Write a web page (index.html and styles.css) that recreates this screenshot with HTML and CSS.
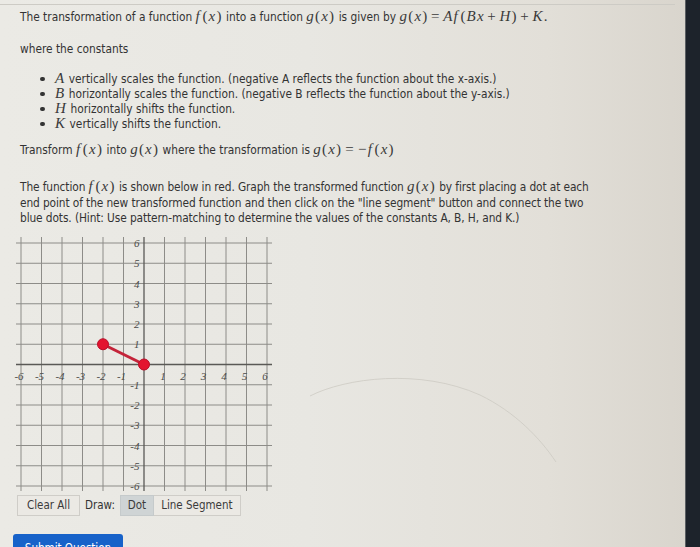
FILE: index.html
```html
<!DOCTYPE html>
<html>
<head>
<meta charset="utf-8">
<link rel="stylesheet" href="styles.css">
</head>
<body>
<div class="screen">
  <div class="page">
    <div class="rule"></div>
    <p class="intro">The transformation of a function <span class="m"><i class="f">f</i>(<i>x</i>)</span> into a function <span class="m"><i>g</i>(<i>x</i>)</span> is given by <span class="m"><i>g</i>(<i>x</i>)<span class="op">=</span><i>A</i><i class="f">f</i>(<i>Bx</i><span class="op">+</span><i>H</i>)<span class="op">+</span><i>K</i>.</span></p>
    <p class="where">where the constants</p>
    <ul class="consts">
      <li><span class="m"><i>A</i></span> vertically scales the function. (negative A reflects the function about the x-axis.)</li>
      <li><span class="m"><i>B</i></span> horizontally scales the function. (negative B reflects the function about the y-axis.)</li>
      <li><span class="m"><i>H</i></span> horizontally shifts the function.</li>
      <li><span class="m"><i>K</i></span> vertically shifts the function.</li>
    </ul>
    <p class="task">Transform <span class="m"><i class="f">f</i>(<i>x</i>)</span> into <span class="m"><i>g</i>(<i>x</i>)</span> where the transformation is <span class="m"><i>g</i>(<i>x</i>)<span class="op">=</span>−<i class="f">f</i>(<i>x</i>)</span></p>
    <p class="desc">The function <span class="m"><i class="f">f</i>(<i>x</i>)</span> is shown below in red. Graph the transformed function <span class="m"><i>g</i>(<i>x</i>)</span> by first placing a dot at each<br>end point of the new transformed function and then click on the "line segment" button and connect the two<br>blue dots. (Hint: Use pattern-matching to determine the values of the constants A, B, H, and K.)</p>

    <svg class="graph" width="264" height="260" viewBox="12 234 264 260" xmlns="http://www.w3.org/2000/svg">
      <g stroke="#8d8c88" stroke-width="1">
        <line x1="21" y1="238" x2="21" y2="492"/>
        <line x1="41.5" y1="238" x2="41.5" y2="492"/>
        <line x1="62" y1="238" x2="62" y2="492"/>
        <line x1="82.5" y1="238" x2="82.5" y2="492"/>
        <line x1="103" y1="238" x2="103" y2="492"/>
        <line x1="123.5" y1="238" x2="123.5" y2="492"/>
        <line x1="164.5" y1="238" x2="164.5" y2="492"/>
        <line x1="185" y1="238" x2="185" y2="492"/>
        <line x1="205.5" y1="238" x2="205.5" y2="492"/>
        <line x1="226" y1="238" x2="226" y2="492"/>
        <line x1="246.5" y1="238" x2="246.5" y2="492"/>
        <line x1="267" y1="238" x2="267" y2="492"/>
        <line x1="16" y1="244" x2="272" y2="244"/>
        <line x1="16" y1="264.25" x2="272" y2="264.25"/>
        <line x1="16" y1="284.5" x2="272" y2="284.5"/>
        <line x1="16" y1="304.75" x2="272" y2="304.75"/>
        <line x1="16" y1="325" x2="272" y2="325"/>
        <line x1="16" y1="345.25" x2="272" y2="345.25"/>
        <line x1="16" y1="385.75" x2="272" y2="385.75"/>
        <line x1="16" y1="406" x2="272" y2="406"/>
        <line x1="16" y1="426.25" x2="272" y2="426.25"/>
        <line x1="16" y1="446.5" x2="272" y2="446.5"/>
        <line x1="16" y1="466.75" x2="272" y2="466.75"/>
        <line x1="16" y1="487" x2="272" y2="487"/>
      </g>
      <g stroke="#5a5956" stroke-width="1.3">
        <line x1="144" y1="238" x2="144" y2="492"/>
        <line x1="16" y1="365.5" x2="272" y2="365.5"/>
      </g>
      <g class="lbl" text-anchor="middle">
        <text x="19" y="381">-6</text>
        <text x="39.5" y="381">-5</text>
        <text x="60" y="381">-4</text>
        <text x="80.5" y="381">-3</text>
        <text x="101" y="381">-2</text>
        <text x="121.5" y="381">-1</text>
        <text x="163" y="381">1</text>
        <text x="183" y="381">2</text>
        <text x="203.5" y="381">3</text>
        <text x="224" y="381">4</text>
        <text x="244.5" y="381">5</text>
        <text x="265" y="381">6</text>
      </g>
      <g class="lbl" text-anchor="end">
        <text x="139.5" y="248">6</text>
        <text x="139.5" y="268.25">5</text>
        <text x="139.5" y="288.5">4</text>
        <text x="139.5" y="308.75">3</text>
        <text x="139.5" y="329">2</text>
        <text x="139.5" y="349.25">1</text>
        <text x="139.5" y="389.75">-1</text>
        <text x="139.5" y="410">-2</text>
        <text x="139.5" y="430.25">-3</text>
        <text x="139.5" y="450.5">-4</text>
        <text x="139.5" y="470.75">-5</text>
        <text x="139.5" y="491">-6</text>
      </g>
      <line x1="103" y1="345.25" x2="144" y2="365.5" stroke="#c4243a" stroke-width="3"/>
      <circle cx="103" cy="345.25" r="5.5" fill="#e3142f" stroke="#b8102a" stroke-width="1"/>
      <circle cx="144" cy="365.5" r="5.5" fill="#e3142f" stroke="#b8102a" stroke-width="1"/>
    </svg>

    <div class="tools">
      <button class="btn clear">Clear All</button>
      <span class="draw">Draw:</span>
      <button class="btn sel">Dot</button>
      <button class="btn seg">Line Segment</button>
    </div>
    <button class="submit">Submit Question</button>

    <svg class="hair" width="260" height="100" viewBox="300 370 260 100" xmlns="http://www.w3.org/2000/svg">
      <path d="M310 396 C345 378 420 368 480 395 C515 412 540 438 556 462" fill="none" stroke="#cdcac3" stroke-width="0.8"/>
    </svg>
  </div>
  <div class="bezel"></div>
</div>
</body>
</html>
```

FILE: styles.css
```css
html, body {
  margin: 0;
  padding: 0;
  width: 700px;
  height: 547px;
  overflow: hidden;
}

.screen {
  display: flex;
  width: 700px;
  height: 547px;
}

.page {
  position: relative;
  width: 665px;
  height: 547px;
  padding-left: 20px;
  background: linear-gradient(90deg, #ebeae5 0%, #e8e7e2 45%, #e2dfd8 80%, #d9d5cd 100%);
  font-family: "DejaVu Sans Condensed", "DejaVu Sans", sans-serif;
  font-size: 11.8px;
  color: #333333;
  overflow: hidden;
}

.bezel {
  flex: 1;
  background: #1d232b;
  border-left: 1px solid #5b5f63;
}

.rule {
  height: 1px;
  margin-top: 4px;
  margin-left: -20px;
  margin-right: 10px;
  background: #cdcbc5;
}

p {
  margin: 0;
  white-space: nowrap;
}

.m {
  font-family: "Liberation Serif", "DejaVu Serif", serif;
  font-size: 15px;
  line-height: 10px;
  letter-spacing: 1.2px;
  color: #3a3a3a;
}

.m i {
  font-style: italic;
}

.m i.f {
  margin-right: 1.5px;
}

.op {
  margin: 0 3px;
}

.intro {
  margin-top: 4px;
  line-height: 16px;
}

.intro .op {
  margin: 0 2.5px;
}

.where {
  margin-top: 16px;
  line-height: 16px;
}

.consts {
  margin: 15px 0 0 0;
  padding-left: 35px;
  line-height: 15px;
  list-style: none;
  white-space: nowrap;
}

.consts li::before {
  content: "";
  display: inline-block;
  width: 4.5px;
  height: 4.5px;
  margin-left: -15px;
  margin-right: 10.5px;
  border-radius: 50%;
  background: #333333;
  vertical-align: 2px;
}

.task {
  margin-top: 10px;
  line-height: 16px;
}

.desc {
  margin-top: 22px;
  line-height: 15.5px;
  letter-spacing: -0.1px;
}

.graph {
  display: block;
  margin-top: 6px;
  margin-left: -8px;
}

.lbl {
  font-family: "Liberation Serif", "DejaVu Serif", serif;
  font-style: italic;
  font-size: 11px;
  fill: #4a4a48;
}

.tools {
  display: flex;
  align-items: center;
  height: 21px;
  margin-top: 2px;
  margin-left: -3px;
}

.btn {
  height: 21px;
  padding: 0 7px;
  border: 1px solid #cfcdc8;
  background: #ebe9e4;
  font-family: "DejaVu Sans Condensed", "DejaVu Sans", sans-serif;
  font-size: 11.5px;
  color: #3b3b3b;
}

.clear {
  width: 63px;
}

.draw {
  margin: 0 5px 0 5px;
  font-size: 11.5px;
}

.sel {
  width: 34px;
  padding: 0;
  background: #cfd4d5;
  border-color: #c5cacb;
}

.seg {
  width: 87px;
  padding: 0;
  border-left: none;
}

.submit {
  display: block;
  margin-top: 18px;
  margin-left: -7px;
  width: 110px;
  height: 26px;
  padding: 3px 0 0 0;
  border: none;
  border-radius: 3px 3px 0 0;
  background: #1762c9;
  color: #ffffff;
  font-family: "DejaVu Sans Condensed", "DejaVu Sans", sans-serif;
  font-size: 11.5px;
  text-align: center;
  line-height: 14px;
}

.hair {
  position: absolute;
  left: 300px;
  top: 370px;
}
```
